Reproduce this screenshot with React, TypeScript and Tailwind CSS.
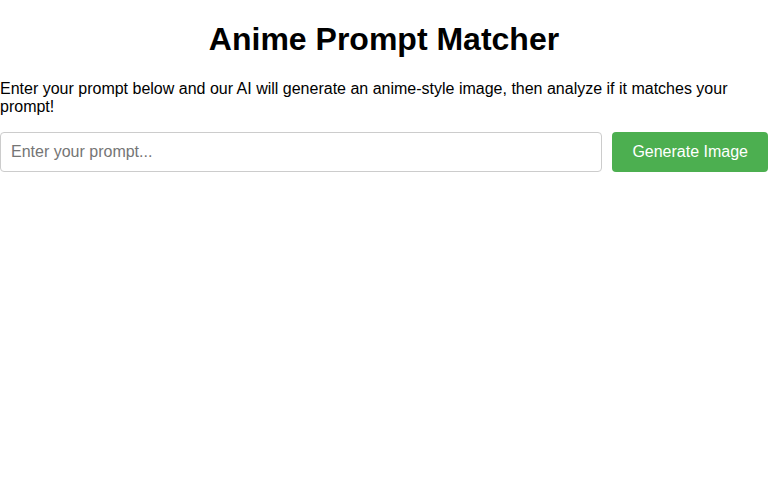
import { useState } from 'react';

export default function App() {
  const [prompt, setPrompt] = useState('');

  return (
    <div className="min-h-screen bg-white text-black font-['Liberation_Sans',Arial,sans-serif]">
      <h1 className="text-center text-[32px] leading-[37px] font-bold pt-[21px] mb-[22px]">
        Anime Prompt Matcher
      </h1>
      <p className="text-base leading-[18px] mb-4">
        Enter your prompt below and our AI will generate an anime-style image, then analyze if it matches your
        prompt!
      </p>
      <div className="flex gap-[10px]">
        <input
          type="text"
          value={prompt}
          onChange={(e) => setPrompt(e.target.value)}
          placeholder="Enter your prompt..."
          className="flex-1 h-10 px-[10px] text-base border border-[#ccc] rounded-[4px] outline-none placeholder:text-[#757575]"
        />
        <button className="h-10 px-5 text-base text-white bg-[#4caf50] rounded-[4px]">
          Generate Image
        </button>
      </div>
    </div>
  );
}
